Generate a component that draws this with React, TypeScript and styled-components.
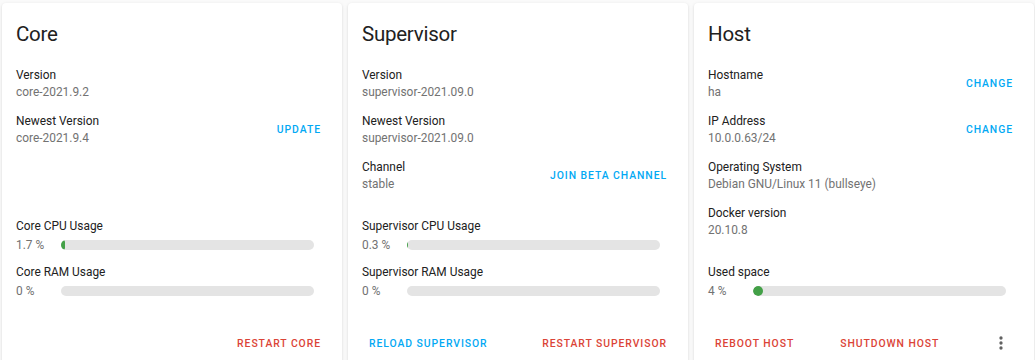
import React from "react";
import styled, { createGlobalStyle } from "styled-components";

const GlobalStyle = createGlobalStyle`
  html, body { margin: 0; padding: 0; background: #fafafa; }
  body {
    font-family: Roboto, "Noto Sans", sans-serif;
    -webkit-font-smoothing: antialiased;
  }
  * { box-sizing: border-box; }
`;

const Page = styled.div`
  display: grid;
  grid-template-columns: repeat(3, 340px);
  gap: 6px;
  padding: 3px 1px 8px 2px;
  align-items: stretch;
`;

const Card = styled.section`
  background: #ffffff;
  border-radius: 4px;
  box-shadow: 0 1px 2px 0 rgba(0, 0, 0, 0.1), 0 1px 4px 0 rgba(0, 0, 0, 0.07);
  display: flex;
  flex-direction: column;
  color: #212121;
`;

const CardHeader = styled.h2`
  margin: 0;
  padding: 19px 14px 14px;
  font-size: 20.5px;
  font-weight: 400;
  line-height: 24px;
  letter-spacing: -0.012em;
  color: #212121;
`;

const CardContent = styled.div`
  flex: 1;
  display: flex;
  flex-direction: column;
  padding: 0 13px 16px 14px;
`;

const InfoRow = styled.div`
  display: flex;
  align-items: center;
  justify-content: space-between;
  padding: 7px 0 6px;
  min-height: 46px;
`;

const InfoText = styled.div`
  display: flex;
  flex-direction: column;
  gap: 1px;
`;

const Label = styled.div`
  font-size: 11.9px;
  line-height: 16px;
  color: #212121;
`;

const Value = styled.div`
  font-size: 11.9px;
  line-height: 16px;
  color: #727272;
`;

const TextButton = styled.button<{ $tone: "primary" | "warning" }>`
  appearance: none;
  border: 0;
  background: transparent;
  padding: 0 8px;
  height: 30px;
  font-family: inherit;
  font-size: 10.4px;
  font-weight: 500;
  letter-spacing: 0.09em;
  text-transform: uppercase;
  color: ${(p) => (p.$tone === "primary" ? "#03a9f4" : "#db4437")};
  border-radius: 4px;
  cursor: pointer;
  white-space: nowrap;
`;

const Metrics = styled.div`
  margin-top: auto;
  padding-top: 14px;
  display: flex;
  flex-direction: column;
`;

const Metric = styled.div`
  padding: 6px 0 5px;
  display: flex;
  flex-direction: column;
`;

const MetricBarRow = styled.div`
  display: flex;
  align-items: center;
  margin-top: 3px;
  height: 16px;
`;

const MetricValue = styled.div`
  width: 45px;
  flex-shrink: 0;
  font-size: 11.9px;
  line-height: 16px;
  color: #727272;
`;

const Bar = styled.div`
  flex: 1;
  height: 10px;
  border-radius: 5px;
  background: #e4e4e4;
  overflow: hidden;
  margin-right: 15px;
`;

const BarFill = styled.div`
  height: 100%;
  border-radius: 5px;
  background: #43a047;
`;

const CardActions = styled.div<{ $justify: string }>`
  display: flex;
  align-items: center;
  justify-content: ${(p) => p.$justify};
  padding: 8px 13px 6px;
  height: 44px;
`;

const ButtonGroup = styled.div`
  display: flex;
  align-items: center;
  gap: 30px;
`;

const IconButton = styled.button`
  appearance: none;
  border: 0;
  background: transparent;
  width: 40px;
  height: 30px;
  padding: 0;
  display: flex;
  align-items: center;
  justify-content: center;
  color: #616161;
  cursor: pointer;
`;

type Row = { label: string; value: string; action?: string };
type MetricT = { label: string; value: number };

const InfoRows = ({ rows }: { rows: Row[] }) => (
  <>
    {rows.map((r) => (
      <InfoRow key={r.label}>
        <InfoText>
          <Label>{r.label}</Label>
          <Value>{r.value}</Value>
        </InfoText>
        {r.action && <TextButton $tone="primary">{r.action}</TextButton>}
      </InfoRow>
    ))}
  </>
);

const MetricList = ({ metrics }: { metrics: MetricT[] }) => (
  <Metrics>
    {metrics.map((m) => (
      <Metric key={m.label}>
        <Label>{m.label}</Label>
        <MetricBarRow>
          <MetricValue>{m.value} %</MetricValue>
          <Bar>
            {m.value > 0 && <BarFill style={{ width: `${m.value}%` }} />}
          </Bar>
        </MetricBarRow>
      </Metric>
    ))}
  </Metrics>
);

const DotsIcon = () => (
  <svg width="20" height="20" viewBox="0 0 24 24" fill="currentColor">
    <path d="M12,16A2,2 0 0,1 14,18A2,2 0 0,1 12,20A2,2 0 0,1 10,18A2,2 0 0,1 12,16M12,10A2,2 0 0,1 14,12A2,2 0 0,1 12,14A2,2 0 0,1 10,12A2,2 0 0,1 12,10M12,4A2,2 0 0,1 14,6A2,2 0 0,1 12,8A2,2 0 0,1 10,6A2,2 0 0,1 12,4Z" />
  </svg>
);

export default function App() {
  return (
    <>
      <GlobalStyle />
      <Page>
        <Card>
          <CardHeader>Core</CardHeader>
          <CardContent>
            <InfoRows
              rows={[
                { label: "Version", value: "core-2021.9.2" },
                { label: "Newest Version", value: "core-2021.9.4", action: "Update" },
              ]}
            />
            <MetricList
              metrics={[
                { label: "Core CPU Usage", value: 1.7 },
                { label: "Core RAM Usage", value: 0 },
              ]}
            />
          </CardContent>
          <CardActions $justify="flex-end">
            <TextButton $tone="warning">Restart Core</TextButton>
          </CardActions>
        </Card>

        <Card>
          <CardHeader>Supervisor</CardHeader>
          <CardContent>
            <InfoRows
              rows={[
                { label: "Version", value: "supervisor-2021.09.0" },
                { label: "Newest Version", value: "supervisor-2021.09.0" },
                { label: "Channel", value: "stable", action: "Join beta channel" },
              ]}
            />
            <MetricList
              metrics={[
                { label: "Supervisor CPU Usage", value: 0.3 },
                { label: "Supervisor RAM Usage", value: 0 },
              ]}
            />
          </CardContent>
          <CardActions $justify="space-between">
            <TextButton $tone="primary">Reload Supervisor</TextButton>
            <TextButton $tone="warning">Restart Supervisor</TextButton>
          </CardActions>
        </Card>

        <Card>
          <CardHeader>Host</CardHeader>
          <CardContent>
            <InfoRows
              rows={[
                { label: "Hostname", value: "ha", action: "Change" },
                { label: "IP Address", value: "10.0.0.63/24", action: "Change" },
                { label: "Operating System", value: "Debian GNU/Linux 11 (bullseye)" },
                { label: "Docker version", value: "20.10.8" },
              ]}
            />
            <MetricList metrics={[{ label: "Used space", value: 4 }]} />
          </CardContent>
          <CardActions $justify="space-between">
            <ButtonGroup>
              <TextButton $tone="warning">Reboot Host</TextButton>
              <TextButton $tone="warning">Shutdown Host</TextButton>
            </ButtonGroup>
            <IconButton aria-label="More">
              <DotsIcon />
            </IconButton>
          </CardActions>
        </Card>
      </Page>
    </>
  );
}
